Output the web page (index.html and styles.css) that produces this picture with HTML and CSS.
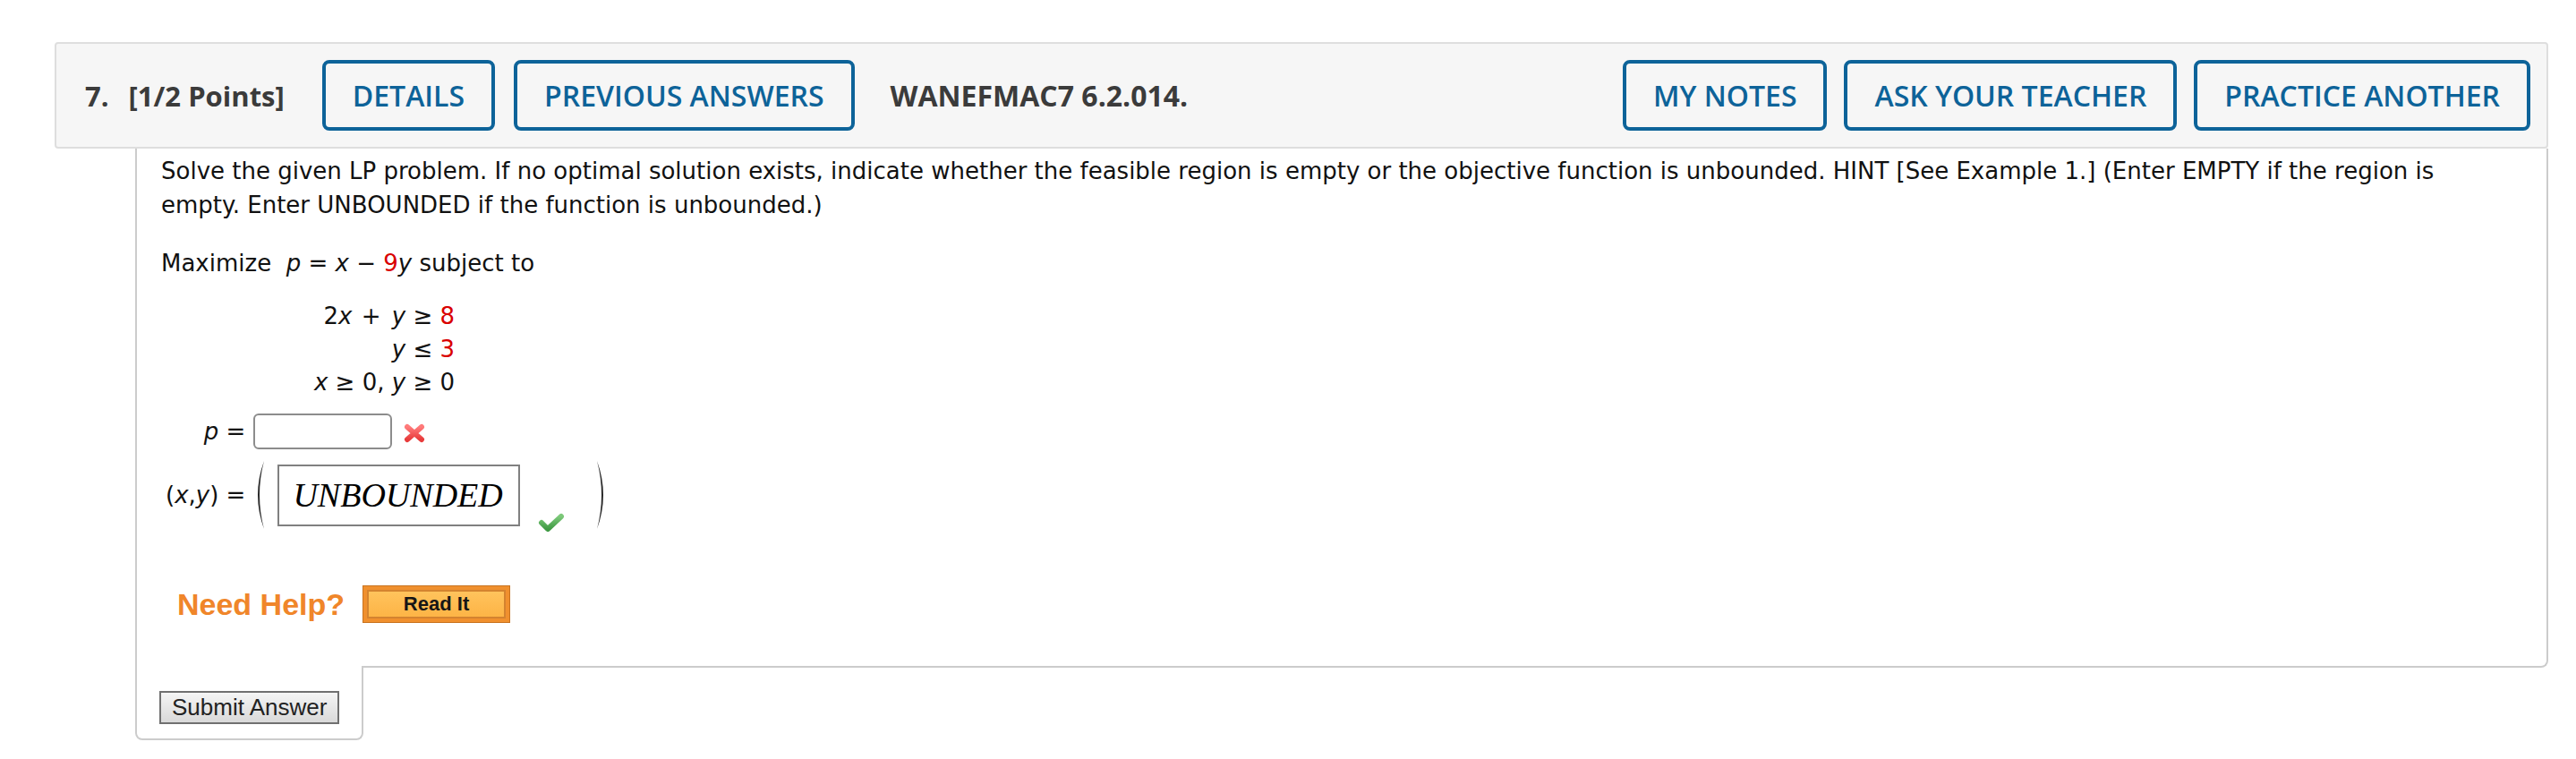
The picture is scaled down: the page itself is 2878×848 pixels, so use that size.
FILE: index.html
```html
<!DOCTYPE html>
<html>
<head>
<meta charset="utf-8">
<title>Question 7</title>
<link rel="stylesheet" href="styles.css">
</head>
<body>
<div class="page">
  <div class="qhead">
    <span class="qnum">7.</span>
    <span class="qpts">[1/2 Points]</span>
    <div class="hgroup left">
      <button class="hbtn">DETAILS</button>
      <button class="hbtn">PREVIOUS ANSWERS</button>
    </div>
    <span class="qref">WANEFMAC7 6.2.014.</span>
    <div class="hgroup right">
      <button class="hbtn">MY NOTES</button>
      <button class="hbtn">ASK YOUR TEACHER</button>
      <button class="hbtn">PRACTICE ANOTHER</button>
    </div>
  </div>

  <div class="qbody">
    <p class="intro">Solve the given LP problem. If no optimal solution exists, indicate whether the feasible region is empty or the objective function is unbounded. HINT [See Example 1.] (Enter EMPTY if the region is empty. Enter UNBOUNDED if the function is unbounded.)</p>
    <p class="objective">Maximize&nbsp; <i>p</i> = <i>x</i> &minus; <span class="red">9</span><i>y</i> subject to</p>
    <div class="constraints">
      <div>2<i>x</i> <span class="op">+</span> <i>y</i> &ge; <span class="red">8</span></div>
      <div><i>y</i> &le; <span class="red">3</span></div>
      <div><i>x</i> &ge; 0, <i>y</i> &ge; 0</div>
    </div>

    <div class="answers">
      <div class="label"><i>p</i> =</div>
      <div class="field">
        <span class="input"></span>
        <svg class="icon-x" width="26" height="24" viewBox="0 0 26 24">
          <defs>
            <linearGradient id="gx" x1="0" y1="0" x2="0" y2="1">
              <stop offset="0" stop-color="#ff7b7b"/>
              <stop offset="1" stop-color="#e83b3b"/>
            </linearGradient>
          </defs>
          <path d="M5 5 L21 19 M21 5 L5 19" stroke="url(#gx)" stroke-width="6" stroke-linecap="round" fill="none"/>
        </svg>
      </div>

      <div class="label">(<i>x</i>,<i>y</i>) =</div>
      <div class="field">
        <svg class="paren" width="14" height="76" viewBox="0 0 14 76"><path d="M12 0 Q-2 38 12 76 Q2 38 12 0 Z" fill="#2a2a2a"/></svg>
        <span class="mathbox">UNBOUNDED</span>
        <svg class="icon-check" width="30" height="24" viewBox="0 0 30 24">
          <defs>
            <linearGradient id="gc" x1="0" y1="0" x2="0" y2="1">
              <stop offset="0" stop-color="#7dc97a"/>
              <stop offset="1" stop-color="#3f9a44"/>
            </linearGradient>
          </defs>
          <path d="M4 12 L11 19 L26 5" stroke="url(#gc)" stroke-width="6" stroke-linecap="round" stroke-linejoin="round" fill="none"/>
        </svg>
        <svg class="paren" width="14" height="76" viewBox="0 0 14 76"><path d="M2 0 Q16 38 2 76 Q12 38 2 0 Z" fill="#2a2a2a"/></svg>
      </div>
    </div>

    <div class="help">
      <span class="needhelp">Need Help?</span>
      <span class="readit"><span class="readit-in">Read It</span></span>
    </div>
  </div>

  <div class="submit-tab">
    <button class="submit">Submit Answer</button>
  </div>
</div>
</body>
</html>
```

FILE: styles.css
```css
* { box-sizing: border-box; }

html, body {
  margin: 0;
  background: #ffffff;
}

.page {
  padding: 47px 31px 0 61px;
}

/* ---------- header ---------- */
.qhead {
  display: flex;
  align-items: center;
  height: 119px;
  padding: 0 18px 0 32px;
  background: #f6f6f6;
  border: 2px solid #dedede;
  border-radius: 4px;
  font-family: "Open Sans", sans-serif;
  color: #3b3b3b;
}

.qnum,
.qpts,
.qref {
  font-weight: 700;
  font-size: 31px;
  white-space: nowrap;
}

.qpts { margin-left: 22px; }

.hgroup {
  display: flex;
  gap: 21px;
}
.hgroup.left { margin-left: 42px; }
.hgroup.right { margin-left: auto; gap: 19px; }

.qref {
  margin-left: 40px;
  font-size: 32px;
}

.hbtn {
  font-family: "Open Sans", sans-serif;
  font-weight: 600;
  font-size: 32px;
  color: #0d6399;
  background: transparent;
  border: 4px solid #0d6399;
  border-radius: 8px;
  height: 79px;
  padding: 0 30px;
  margin: 0;
  white-space: nowrap;
}

/* ---------- body ---------- */
.qbody {
  margin-left: 90px;
  border-left: 2px solid #cccccc;
  border-right: 2px solid #cccccc;
  border-bottom: 2px solid #cccccc;
  border-bottom-right-radius: 8px;
  padding: 6px 80px 47px 27px;
  font-family: "DejaVu Sans", Verdana, sans-serif;
  font-size: 26px;
  color: #111;
}

.qbody p { margin: 0; }

.intro { line-height: 38px; }

.objective {
  margin-top: 27px !important;
  line-height: 38px;
}

.red { color: #d90000; }

.constraints {
  width: 328px;
  margin-top: 22px;
  text-align: right;
  line-height: 37px;
}

.op { margin: 0 4px 0 2px; }

.answers {
  display: grid;
  grid-template-columns: auto auto;
  justify-content: start;
  align-items: center;
  column-gap: 9px;
  row-gap: 13px;
  margin-top: 16px;
  padding-left: 5px;
}

.label {
  justify-self: end;
  white-space: nowrap;
}

.field {
  display: flex;
  align-items: center;
}

.input {
  display: block;
  width: 155px;
  height: 40px;
  border: 2px solid #8c8c8c;
  border-radius: 6px;
  background: #fff;
}

.icon-x { margin-left: 12px; margin-top: 4px; }

.paren { display: block; }

.mathbox {
  margin-left: 13px;
  width: 271px;
  height: 69px;
  border: 2px solid #808080;
  padding-left: 15px;
  font-family: "Liberation Serif", "Times New Roman", serif;
  font-style: italic;
  font-size: 38px;
  line-height: 65px;
  color: #000;
}

.icon-check {
  align-self: flex-end;
  margin: 0 34px -5px 20px;
}

.help {
  display: flex;
  align-items: center;
  margin-top: 62px;
  padding-left: 18px;
  height: 44px;
}

.needhelp {
  font-family: "Liberation Sans", Arial, sans-serif;
  font-weight: 700;
  font-size: 34px;
  color: #f0862a;
}

.readit {
  margin-left: 20px;
  display: inline-flex;
  padding: 4px;
  background: #f0902e;
  border: 1px solid #c8731f;
}

.readit-in {
  display: block;
  width: 155px;
  height: 32px;
  border: 2px solid #d4832f;
  background: linear-gradient(#ffc35c, #fdb446);
  text-align: center;
  font-family: "Liberation Sans", Arial, sans-serif;
  font-weight: 700;
  font-size: 22px;
  line-height: 28px;
  color: #161616;
}

/* ---------- submit tab ---------- */
.submit-tab {
  margin-left: 90px;
  margin-top: -2px;
  width: 255px;
  background: #fff;
  border: 2px solid #cccccc;
  border-top: 0;
  border-radius: 0 0 8px 8px;
  padding: 28px 0 16px 25px;
}

.submit {
  display: block;
  height: 37px;
  margin: 0;
  padding: 0 12px;
  border: 2px solid #707070;
  background: linear-gradient(#f5f5f5, #d9d9d9);
  font-family: "Liberation Sans", Arial, sans-serif;
  font-size: 26px;
  color: #222;
}
```
